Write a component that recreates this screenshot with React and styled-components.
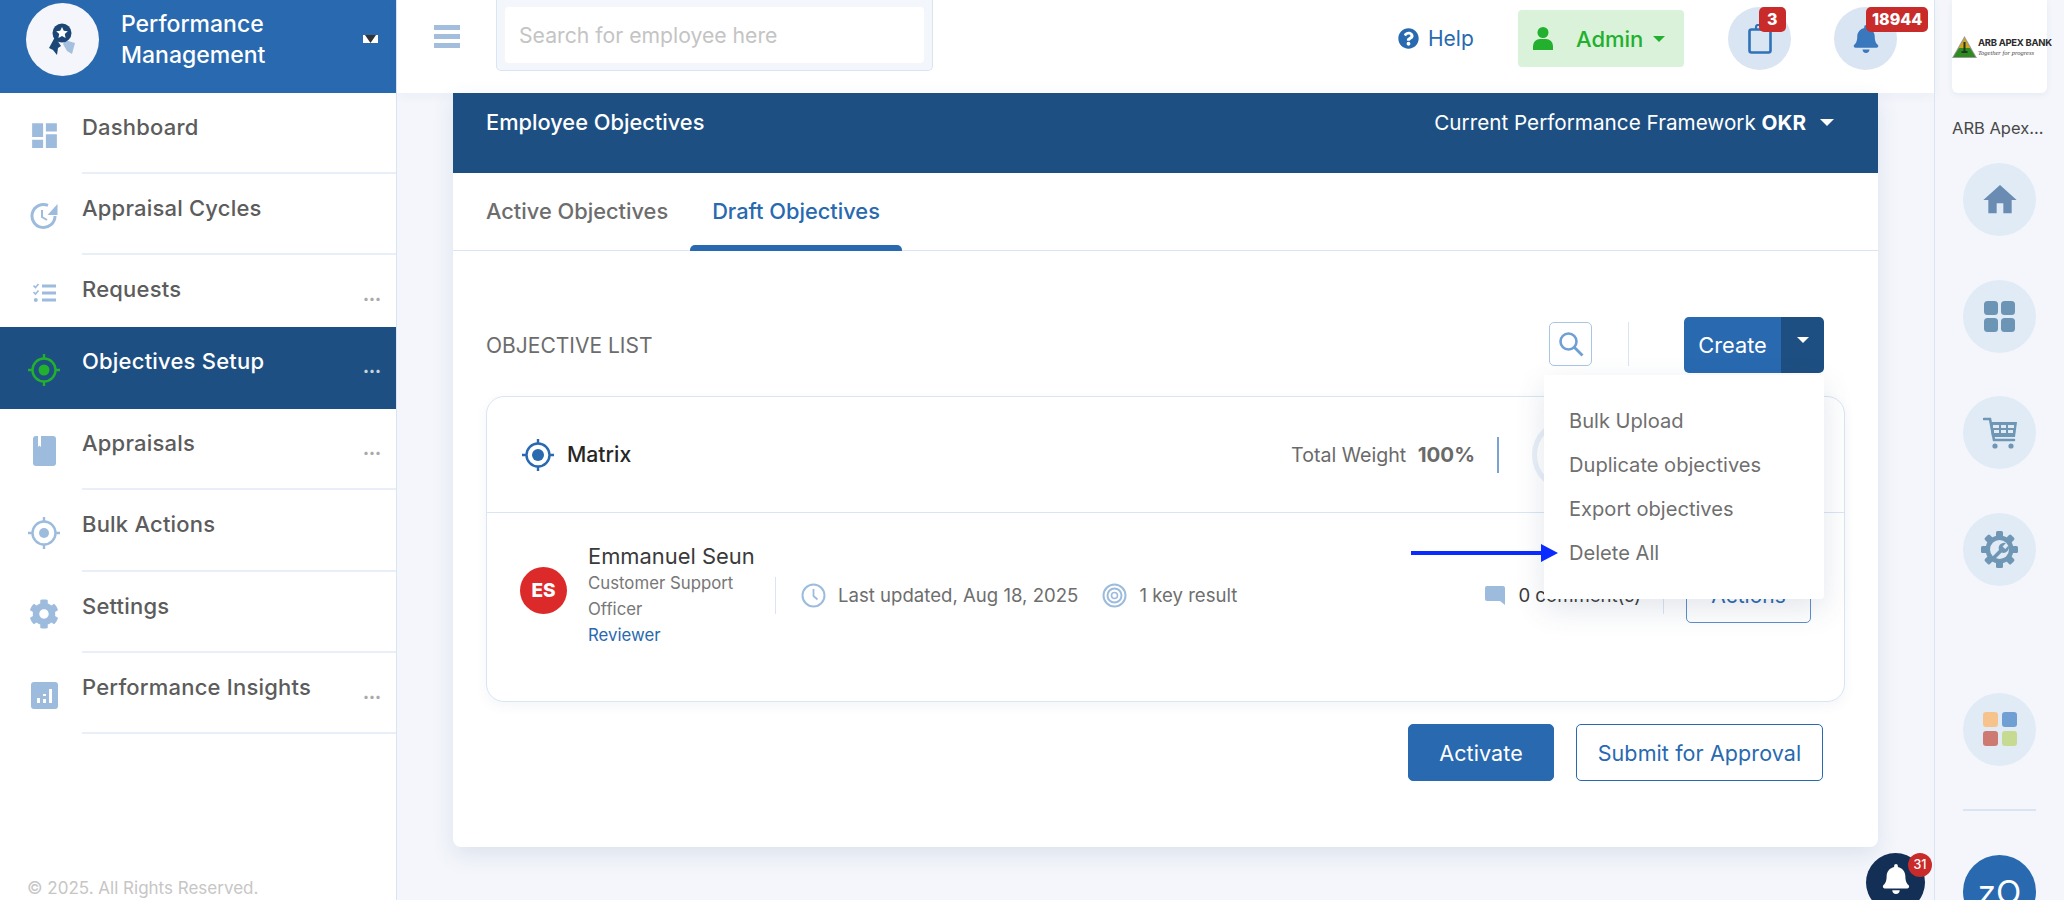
import React from 'react'
import styled, { createGlobalStyle } from 'styled-components'
import { FaBell, FaCog, FaQuestionCircle } from 'react-icons/fa'
import { MdDashboard, MdHome } from 'react-icons/md'

const BLUE = '#2869b0'
const NAVY = '#1e4f82'
const PALE = '#9dbcdd'
const LINE = '#d9e5f3'

const Global = createGlobalStyle`
  html, body { margin: 0; padding: 0; background: #f4f6fb; overflow: hidden; }
  body { font-family: Inter, "Liberation Sans", sans-serif; }
  * { box-sizing: border-box; }
`

const Page = styled.div`
  position: relative;
  display: grid;
  grid-template-columns: 397px 1537px 130px;
  width: 2064px;
  height: 900px;
  overflow: hidden;
  background: #f4f6fb;
`

/* left sidebar */
const Sidebar = styled.aside`
  display: flex;
  flex-direction: column;
  background: #fff;
  border-right: 1px solid ${LINE};
`
const Brand = styled.div`
  display: flex;
  flex: 0 0 93px;
  align-items: flex-start;
  padding: 3px 18px 0 26px;
  background: ${BLUE};
`
const BrandLogo = styled.div`
  display: flex;
  align-items: center;
  justify-content: center;
  width: 73px;
  height: 73px;
  border-radius: 50%;
  background: #f4f6fb;
`
const BrandName = styled.div`
  flex: 1;
  margin: 6px 0 0 22px;
  color: #fff;
  font-size: 23px;
  font-weight: 500;
  line-height: 31px;
`
const BrandArrow = styled.svg`
  margin-top: 32px;
`
const NavItem = styled.div`
  display: flex;
  flex: 0 0 ${p => p.$h}px;
  background: ${p => (p.$active ? NAVY : '#fff')};
  color: ${p => (p.$active ? '#fff' : '#5c5c5c')};
`
const NavIcon = styled.div`
  display: flex;
  flex: 0 0 82px;
  align-items: center;
  justify-content: center;
  padding: 3px 0 0 6px;
`
const NavBody = styled.div`
  display: flex;
  flex: 1;
  justify-content: space-between;
  padding: 21px 15px 0 0;
  border-bottom: ${p => (p.$plain ? '0' : '2px solid #e8eff8')};
`
const NavLabel = styled.span`
  font-size: 22px;
  font-weight: 500;
  line-height: 27px;
  letter-spacing: 0.2px;
`
const NavMore = styled.span`
  margin-top: 9px;
  color: ${p => (p.$active ? '#c9d3de' : '#a9a9a9')};
  font-size: 16px;
  font-weight: 900;
  line-height: 20px;
`
const Copy = styled.div`
  margin-top: auto;
  padding: 0 0 2px 27px;
  color: #c6c6c6;
  font-size: 17px;
  line-height: 20px;
`

/* centre column */
const Center = styled.div`
  display: flex;
  flex-direction: column;
  min-width: 0;
`
const TopBar = styled.header`
  display: flex;
  flex: 0 0 93px;
  align-items: flex-start;
  padding-left: 37px;
  background: #fff;
  box-shadow: 0 3px 10px rgba(60, 90, 140, 0.05);
`
const Burger = styled.div`
  display: flex;
  flex-direction: column;
  justify-content: space-between;
  width: 26px;
  height: 23px;
  margin-top: 25px;
  span { height: 5px; background: #a3bedd; }
`
const SearchWrap = styled.div`
  width: 437px;
  height: 71px;
  margin-left: 36px;
  padding: 7px 8px 8px;
  background: #f3f6fb;
  border: 1px solid ${LINE};
  border-top: 0;
  border-radius: 0 0 5px 5px;
`
const SearchInput = styled.input`
  width: 100%;
  height: 56px;
  padding: 0 14px;
  border: 0;
  border-radius: 4px;
  background: #fff;
  font: 400 21.2px Inter, sans-serif;
  &::placeholder { color: #c4c4c4; opacity: 1; }
`
const HelpLink = styled.div`
  display: flex;
  align-items: center;
  gap: 9px;
  width: 79px;
  height: 76px;
  margin-left: 465px;
  color: ${BLUE};
  font-size: 21px;
`
const AdminButton = styled.div`
  display: flex;
  align-items: center;
  width: 166px;
  height: 57px;
  margin: 10px 0 0 41px;
  padding: 0 0 0 15px;
  border-radius: 4px;
  background: #d9f2d9;
  color: #22b02e;
  font-size: 22px;
  font-weight: 500;
`
const AdminName = styled.span`
  margin: 0 10px 0 23px;
`
const Caret = styled.i`
  display: block;
  width: 0;
  height: 0;
  border-left: ${p => p.$s || 6}px solid transparent;
  border-right: ${p => p.$s || 6}px solid transparent;
  border-top: ${p => p.$s || 6}px solid ${p => p.$c || '#fff'};
`
const RoundIcon = styled.div`
  position: relative;
  display: flex;
  align-items: center;
  justify-content: center;
  width: 63px;
  height: 63px;
  margin: 7px 0 0 ${p => p.$ml}px;
  border-radius: 50%;
  background: #d9e5f3;
`
const CountBadge = styled.span`
  position: absolute;
  top: 0;
  left: ${p => p.$left}px;
  height: 25px;
  padding: 0 ${p => p.$pad}px;
  border-radius: 5px;
  background: #c92a2a;
  color: #fff;
  font-size: 16px;
  font-weight: 800;
  line-height: 25px;
`

const Card = styled.section`
  display: flex;
  flex-direction: column;
  flex: 0 0 754px;
  width: 1425px;
  margin-left: 56px;
  border-radius: 0 0 8px 8px;
  background: #fff;
  box-shadow: 0 8px 22px rgba(60, 90, 140, 0.12);
`
const CardHead = styled.div`
  display: flex;
  justify-content: space-between;
  height: 80px;
  padding: 16px 44px 0 33px;
  background: ${NAVY};
  color: #fff;
  font-size: 20.7px;
  line-height: 27px;
`
const CardTitle = styled.div`
  font-size: 21.8px;
  font-weight: 500;
`
const Framework = styled.div`
  display: flex;
  align-items: center;
  height: 27px;
  gap: 14px;
  b { font-weight: 700; }
`
const Tabs = styled.div`
  display: flex;
  height: 78px;
  padding-left: 11px;
  border-bottom: 1px solid ${LINE};
`
const Tab = styled.div`
  position: relative;
  padding: 25px 22px 0;
  color: ${p => (p.$active ? BLUE : '#6d6d6d')};
  font-size: 21.8px;
  font-weight: 500;
  line-height: 26px;
  &::after {
    content: '';
    display: ${p => (p.$active ? 'block' : 'none')};
    position: absolute;
    left: 0;
    right: 0;
    bottom: -1px;
    height: 6px;
    border-radius: 5px 5px 0 0;
    background: ${BLUE};
  }
`
const CardBody = styled.div`
  padding: 0 33px;
`
const Toolbar = styled.div`
  display: flex;
  align-items: center;
  justify-content: space-between;
  height: 56px;
  margin-top: 66px;
  padding-right: 21px;
`
const ListTitle = styled.div`
  color: #6c6c6c;
  font-size: 21px;
`
const ToolGroup = styled.div`
  display: flex;
  align-items: center;
`
const SearchButton = styled.div`
  display: flex;
  align-items: center;
  justify-content: center;
  width: 43px;
  height: 44px;
  margin-top: -2px;
  border: 1.5px solid #a9c5e5;
  border-radius: 5px;
`
const ToolDivider = styled.div`
  width: 1px;
  height: 44px;
  margin: -2px 55px 0 36px;
  background: ${LINE};
`
const CreateGroup = styled.div`
  position: relative;
  display: flex;
  width: 140px;
  height: 56px;
  color: #fff;
  font-size: 21.8px;
`
const CreateMain = styled.div`
  display: flex;
  flex: 1;
  align-items: center;
  justify-content: center;
  border-radius: 5px 0 0 5px;
  background: ${BLUE};
`
const CreateSide = styled.div`
  display: flex;
  justify-content: center;
  width: 43px;
  padding-top: 20px;
  border-radius: 0 5px 5px 0;
  background: ${NAVY};
`
const Menu = styled.div`
  position: absolute;
  top: 58px;
  right: 0;
  z-index: 5;
  width: 280px;
  height: 224px;
  padding: 24px 0 0 25px;
  border-radius: 0 0 4px 4px;
  background: #fff;
  box-shadow: 0 10px 30px rgba(60, 80, 120, 0.14);
`
const MenuItem = styled.div`
  color: #6f6f6f;
  font-size: 20.1px;
  line-height: 44px;
`
const Pointer = styled.svg`
  position: absolute;
  top: 169px;
  left: -133px;
`
const Matrix = styled.div`
  width: 1359px;
  height: 306px;
  margin-top: 23px;
  border: 1.5px solid ${LINE};
  border-radius: 18px;
  background: #fff;
  box-shadow: 0 4px 12px rgba(60, 90, 140, 0.06);
`
const MatrixHead = styled.div`
  display: flex;
  align-items: center;
  height: 116px;
  padding: 0 240px 0 35px;
  border-bottom: 1.5px solid ${LINE};
`
const MatrixName = styled.div`
  flex: 1;
  margin: -2px 0 0 13px;
  color: #262626;
  font-size: 21.2px;
  font-weight: 500;
`
const Weight = styled.div`
  color: #6a6a6a;
  font-size: 19.6px;
  b { margin-left: 6px; font-size: 20.5px; font-weight: 700; }
`
const WeightDivider = styled.div`
  width: 2px;
  height: 36px;
  margin: 0 33px 0 22px;
  background: #7aa3d2;
`
const WeightDial = styled.div`
  width: 72px;
  height: 72px;
  border: 5px solid #e9f0f8;
  border-radius: 50%;
`
const Row = styled.div`
  display: flex;
  align-items: center;
  padding: 29px 33px 0 33px;
`
const Avatar = styled.div`
  display: flex;
  flex: 0 0 47px;
  align-items: center;
  justify-content: center;
  height: 47px;
  margin-top: -10px;
  border-radius: 50%;
  background: #dc2a2a;
  color: #fff;
  font-size: 19px;
  font-weight: 800;
`
const Person = styled.div`
  width: 166px;
  margin: 0 21px 0 21px;
`
const PersonName = styled.div`
  color: #3a3a3a;
  font-size: 21.9px;
  line-height: 28px;
  white-space: nowrap;
`
const PersonLine = styled.div`
  color: ${p => p.$c || '#777'};
  font-size: 16.8px;
  line-height: 26px;
`
const RowDivider = styled.div`
  width: 1px;
  height: 37px;
  margin: ${p => p.$m};
  background: ${LINE};
`
const Meta = styled.div`
  display: flex;
  align-items: center;
  gap: ${p => p.$gap || 12}px;
  margin-right: ${p => p.$mr || 0}px;
  color: ${p => p.$c || '#6e6e6e'};
  font-size: 18.6px;
`
const Comments = styled(Meta)`
  margin-left: auto;
`
const ActionsButton = styled.div`
  display: flex;
  flex: 0 0 125px;
  align-items: center;
  justify-content: center;
  height: 56px;
  border: 1.5px solid #5b8fca;
  border-radius: 5px;
  color: ${BLUE};
  font-size: 21px;
`
const Footer = styled.div`
  display: flex;
  justify-content: flex-end;
  gap: 22px;
  margin-top: 22px;
  padding-right: 22px;
`
const FootButton = styled.div`
  display: flex;
  align-items: center;
  justify-content: center;
  width: ${p => p.$w}px;
  height: 57px;
  border: 1.5px solid ${BLUE};
  border-radius: 5px;
  background: ${p => (p.$fill ? BLUE : '#fff')};
  color: ${p => (p.$fill ? '#fff' : BLUE)};
  font-size: 21.5px;
  letter-spacing: 0.1px;
`
const FloatBell = styled.div`
  position: absolute;
  top: 853px;
  left: 1866px;
  z-index: 6;
  display: flex;
  align-items: center;
  justify-content: center;
  width: 59px;
  height: 59px;
  padding-bottom: 8px;
  border-radius: 50%;
  background: #132f55;
`
const FloatBadge = styled.span`
  position: absolute;
  top: 0;
  right: -7px;
  width: 24px;
  height: 24px;
  border-radius: 50%;
  background: #c92a2a;
  color: #fff;
  font-size: 12.5px;
  font-weight: 500;
  line-height: 24px;
  text-align: center;
`

/* right rail */
const Rail = styled.aside`
  display: flex;
  flex-direction: column;
  align-items: center;
  border-left: 1px solid ${LINE};
  overflow: hidden;
`
const LogoCard = styled.div`
  display: flex;
  flex: 0 0 93px;
  align-items: center;
  width: 95px;
  border-radius: 0 0 6px 6px;
  background: #fff;
  box-shadow: 0 2px 6px rgba(60, 90, 140, 0.07);
`
const LogoText = styled.div`
  margin-left: 1px;
  color: #2b2b2b;
  font-size: 9.5px;
  font-weight: 700;
  line-height: 12px;
  white-space: nowrap;
  letter-spacing: -0.3px;
`
const LogoTag = styled.div`
  color: #444;
  font: italic 400 6.5px/8px "Liberation Serif", serif;
  letter-spacing: 0;
`
const BankName = styled.div`
  flex: 0 0 24px;
  width: 95px;
  margin: 23px 0 23px;
  color: #484848;
  font-size: 16.5px;
  line-height: 24px;
  white-space: nowrap;
`
const RailStack = styled.div`
  display: flex;
  flex: 0 0 auto;
  flex-direction: column;
  align-items: center;
  gap: 43.7px;
`
const RailCircle = styled.div`
  display: flex;
  flex: 0 0 73px;
  align-items: center;
  justify-content: center;
  width: 73px;
  height: 73px;
  margin-top: ${p => p.$mt || 0}px;
  border-radius: 50%;
  background: ${p => p.$bg || '#e1ebf6'};
  color: #fff;
  font-size: 33px;
`
const RailDivider = styled.div`
  flex: 0 0 2px;
  width: 73px;
  background: ${LINE};
`

/* drawn icons */
const TargetIcon = ({ size = 32, color = PALE, dot = 5 }) => (
  <svg width={size} height={size} viewBox="0 0 32 32">
    <circle cx="16" cy="16" r="11.5" fill="none" stroke={color} strokeWidth="2.4" />
    <circle cx="16" cy="16" r={dot} fill={color} />
    <path d="M16 0v5M16 27v5M0 16h5M27 16h5" stroke={color} strokeWidth="2.4" />
  </svg>
)
const CycleIcon = () => (
  <svg width="28" height="28" viewBox="0 0 28 28" fill="none">
    <path d="M25 14a11.5 11.5 0 1 1-7-10.6" stroke={PALE} strokeWidth="3" />
    <path d="M27.5 2v11h-10z" fill={PALE} />
    <path d="M12 8v7l5 3" stroke={PALE} strokeWidth="2" />
  </svg>
)
const ChecklistIcon = () => (
  <svg width="23" height="20" viewBox="0 0 23 20" fill="none" stroke={PALE}>
    <path d="M0.5 2.5l2 2 3-3.5M0.5 9l2 2 3-3.5" strokeWidth="1.6" />
    <circle cx="2.8" cy="17" r="2" fill={PALE} stroke="none" />
    <path d="M9 3h14M9 10h14M9 17h14" strokeWidth="3" />
  </svg>
)
const BookIcon = () => (
  <svg width="23" height="30" viewBox="0 0 23 30">
    <rect width="23" height="30" rx="3" fill={PALE} />
    <path d="M5 0h3v11l-1.5-1.5L5 11z" fill="#fff" />
  </svg>
)
const InsightsIcon = () => (
  <svg width="27" height="27" viewBox="0 0 27 27">
    <rect width="27" height="27" rx="3" fill={PALE} />
    <path d="M6 16h3v5H6zM12 12h3v2h-3zM12 17h3v4h-3zM18 7h3v14h-3z" fill="#fff" />
  </svg>
)
const RibbonIcon = () => (
  <svg width="27" height="33" viewBox="0 0 27 33">
    <path d="M16 17l10 3-3 11-5-3-4-7z" fill="#a5c0de" />
    <path d="M6 14l6 9-3 2-1 7-4-5-4-2z" fill="#1c4675" />
    <circle cx="13" cy="10" r="9.5" fill="#1c4675" />
    <path d="M13 4l1.8 3.8 4 .5-3 2.8.8 4-3.6-2-3.6 2 .8-4-3-2.8 4-.5z" fill="#fff" />
  </svg>
)
const BrandCaret = () => (
  <BrandArrow width="15" height="8" viewBox="0 0 15 8">
    <rect width="15" height="8" fill="#fff" />
    <path d="M2 0h11L7.5 8z" fill="#333" />
  </BrandArrow>
)
const UserIcon = () => (
  <svg width="20" height="23" viewBox="0 0 20 23" fill="#22b02e">
    <circle cx="10" cy="5.5" r="5.5" />
    <path d="M0 23v-4a7 7 0 0 1 7-7h6a7 7 0 0 1 7 7v4z" />
  </svg>
)
const ClipIcon = () => (
  <svg width="24" height="30" viewBox="0 0 24 30" fill="none" stroke="#2f72b8">
    <rect x="1.5" y="5.5" width="21" height="23" rx="2" strokeWidth="2.6" />
    <path d="M8 6V3a2 2 0 0 1 2-2h4a2 2 0 0 1 2 2v3" strokeWidth="2.2" />
  </svg>
)
const SearchIcon = () => (
  <svg width="26" height="26" viewBox="0 0 26 26" fill="none" stroke="#6f9fd4">
    <circle cx="10.5" cy="10.5" r="8" strokeWidth="2.6" />
    <path d="M16.5 16.5l8 8" strokeWidth="2.8" />
  </svg>
)
const ClockIcon = () => (
  <svg width="25" height="25" viewBox="0 0 25 25" fill="none" stroke={PALE}>
    <circle cx="12.5" cy="12.5" r="11" strokeWidth="2" />
    <path d="M12.5 6v7l4 3.5" strokeWidth="1.8" />
  </svg>
)
const RingsIcon = () => (
  <svg width="25" height="25" viewBox="0 0 25 25" fill="none" stroke={PALE}>
    <circle cx="12.5" cy="12.5" r="11" strokeWidth="2" />
    <circle cx="12.5" cy="12.5" r="7" strokeWidth="2" />
    <circle cx="12.5" cy="12.5" r="3" strokeWidth="1.6" />
  </svg>
)
const CommentIcon = () => (
  <svg width="20" height="19" viewBox="0 0 20 19">
    <path d="M2 0h16a2 2 0 0 1 2 2v17l-5-4H2a2 2 0 0 1-2-2V2a2 2 0 0 1 2-2z" fill={PALE} />
  </svg>
)
const GridIcon = () => (
  <svg width="31" height="31" viewBox="0 0 31 31" fill="#6c94b5">
    <rect width="14" height="14" rx="3.5" />
    <rect x="17" width="14" height="14" rx="3.5" />
    <rect y="17" width="14" height="14" rx="3.5" />
    <rect x="17" y="17" width="14" height="14" rx="3.5" />
  </svg>
)
const CartIcon = () => (
  <svg width="34" height="32" viewBox="0 0 34 32">
    <path d="M1 2h6l4 21h20" fill="none" stroke="#6f97b5" strokeWidth="2.6" strokeLinecap="round" />
    <path d="M7 5h27l-2 15H9z" fill="#6f97b5" />
    <path d="M10 8h6v3h-6zM18 8h5v3h-5zM25 8h6v3h-6zM11 13h5v3h-5zM18 13h5v3h-5zM25 13h5v3h-5z" fill="#e1ebf6" />
    <circle cx="12" cy="29" r="2.6" fill="#6f97b5" />
    <circle cx="28" cy="29" r="2.6" fill="#6f97b5" />
  </svg>
)
const ToolGearIcon = () => (
  <svg width="37" height="37" viewBox="0 0 37 37">
    {[0, 45, 90, 135].map(a => (
      <rect key={a} x="15" y="0" width="7" height="37" rx="1.5" fill="#6f97b5" transform={`rotate(${a} 18.5 18.5)`} />
    ))}
    <circle cx="18.5" cy="18.5" r="14" fill="#6f97b5" />
    <circle cx="18.5" cy="18.5" r="9.5" fill="#e1ebf6" />
    <path d="M11 26l7-7a5.5 5.5 0 0 1 7-7l-3.4 3.4 2.6 2.6 3.4-3.4a5.5 5.5 0 0 1-7 7l-7 7z" fill="#6f97b5" />
  </svg>
)
const AppsIcon = () => (
  <svg width="34" height="34" viewBox="0 0 34 34">
    <rect width="15" height="15" rx="3" fill="#f6c38c" />
    <rect x="19" width="15" height="15" rx="3" fill="#709fd4" />
    <rect y="19" width="15" height="15" rx="3" fill="#cd7a72" />
    <rect x="19" y="19" width="15" height="15" rx="3" fill="#c6da92" />
  </svg>
)
const BankMark = () => (
  <svg width="25" height="22" viewBox="0 0 25 22" style={{ flex: '0 0 25px' }}>
    <path d="M12.5 0L25 22H0z" fill="#9a9a9a" />
    <path d="M12.5 2L18 12H7z" fill="#d3a51c" />
    <path d="M7 12h11l5.5 9h-22z" fill="#2f8a22" />
    <path d="M11.5 6h2v9h-2zM9.5 15h6v2h-6z" fill="#1b3a20" />
  </svg>
)

const nav = [
  { label: 'Dashboard', h: 81, icon: <MdDashboard size={33} color={PALE} /> },
  { label: 'Appraisal Cycles', h: 81, icon: <CycleIcon /> },
  { label: 'Requests', h: 72, more: true, plain: true, icon: <ChecklistIcon /> },
  { label: 'Objectives Setup', h: 82, more: true, active: true, plain: true, icon: <TargetIcon color="#22b02e" dot={5.5} /> },
  { label: 'Appraisals', h: 81, more: true, icon: <BookIcon /> },
  { label: 'Bulk Actions', h: 82, icon: <TargetIcon /> },
  { label: 'Settings', h: 81, icon: <FaCog size={30} color={PALE} /> },
  { label: 'Performance Insights', h: 81, more: true, icon: <InsightsIcon /> },
]

const App = () => {
  return (
    <Page>
      <Global />
      <Sidebar>
        <Brand>
          <BrandLogo><RibbonIcon /></BrandLogo>
          <BrandName>Performance<br />Management</BrandName>
          <BrandCaret />
        </Brand>
        {nav.map(item => (
          <NavItem key={item.label} $h={item.h} $active={item.active}>
            <NavIcon>{item.icon}</NavIcon>
            <NavBody $plain={item.plain}>
              <NavLabel>{item.label}</NavLabel>
              {item.more ? <NavMore $active={item.active}>...</NavMore> : null}
            </NavBody>
          </NavItem>
        ))}
        <Copy>© 2025. All Rights Reserved.</Copy>
      </Sidebar>

      <Center>
        <TopBar>
          <Burger><span /><span /><span /></Burger>
          <SearchWrap>
            <SearchInput placeholder="Search for employee here" readOnly />
          </SearchWrap>
          <HelpLink><FaQuestionCircle size={21} />Help</HelpLink>
          <AdminButton>
            <UserIcon />
            <AdminName>Admin</AdminName>
            <Caret $c="#22b02e" />
          </AdminButton>
          <RoundIcon $ml={44}>
            <ClipIcon />
            <CountBadge $left={31} $pad={8}>3</CountBadge>
          </RoundIcon>
          <RoundIcon $ml={43}>
            <FaBell size={28} color="#3a78bd" />
            <CountBadge $left={32} $pad={6}>18944</CountBadge>
          </RoundIcon>
        </TopBar>

        <Card>
          <CardHead>
            <CardTitle>Employee Objectives</CardTitle>
            <Framework>
              <span>Current Performance Framework <b>OKR</b></span>
              <Caret $s={7} />
            </Framework>
          </CardHead>
          <Tabs>
            <Tab>Active Objectives</Tab>
            <Tab $active>Draft Objectives</Tab>
          </Tabs>
          <CardBody>
            <Toolbar>
              <ListTitle>OBJECTIVE LIST</ListTitle>
              <ToolGroup>
                <SearchButton><SearchIcon /></SearchButton>
                <ToolDivider />
                <CreateGroup>
                  <CreateMain>Create</CreateMain>
                  <CreateSide><Caret /></CreateSide>
                  <Menu>
                    <MenuItem>Bulk Upload</MenuItem>
                    <MenuItem>Duplicate objectives</MenuItem>
                    <MenuItem>Export objectives</MenuItem>
                    <MenuItem>Delete All</MenuItem>
                    <Pointer width="147" height="18" viewBox="0 0 147 18">
                      <path d="M0 7h130V0l17 9-17 9v-7H0z" fill="#0a2bff" />
                    </Pointer>
                  </Menu>
                </CreateGroup>
              </ToolGroup>
            </Toolbar>
            <Matrix>
              <MatrixHead>
                <TargetIcon size={32} color={BLUE} dot={6} />
                <MatrixName>Matrix</MatrixName>
                <Weight>Total Weight <b>100%</b></Weight>
                <WeightDivider />
                <WeightDial />
              </MatrixHead>
              <Row>
                <Avatar>ES</Avatar>
                <Person>
                  <PersonName>Emmanuel Seun</PersonName>
                  <PersonLine>Customer Support Officer</PersonLine>
                  <PersonLine $c={BLUE}>Reviewer</PersonLine>
                </Person>
                <RowDivider $m="0 25px 0 0" />
                <Meta $mr={24}><ClockIcon />Last updated, Aug 18, 2025</Meta>
                <Meta><RingsIcon />1 key result</Meta>
                <Comments $gap={13} $c="#3a3a3a"><CommentIcon />0 comment(s)</Comments>
                <RowDivider $m="0 22px" />
                <ActionsButton>Actions</ActionsButton>
              </Row>
            </Matrix>
            <Footer>
              <FootButton $w={146} $fill>Activate</FootButton>
              <FootButton $w={247}>Submit for Approval</FootButton>
            </Footer>
          </CardBody>
        </Card>
      </Center>

      <Rail>
        <LogoCard>
          <BankMark />
          <LogoText>
            ARB APEX BANK
            <LogoTag>Together for progress</LogoTag>
          </LogoText>
        </LogoCard>
        <BankName>ARB Apex...</BankName>
        <RailStack>
          <RailCircle><MdHome size={40} color="#6a8cb3" /></RailCircle>
          <RailCircle><GridIcon /></RailCircle>
          <RailCircle><CartIcon /></RailCircle>
          <RailCircle><ToolGearIcon /></RailCircle>
          <RailCircle $mt={63}><AppsIcon /></RailCircle>
          <RailDivider />
          <RailCircle $bg={BLUE}>zO</RailCircle>
        </RailStack>
      </Rail>

      <FloatBell>
        <FaBell size={30} color="#fff" />
        <FloatBadge>31</FloatBadge>
      </FloatBell>
    </Page>
  )
}

export default App
